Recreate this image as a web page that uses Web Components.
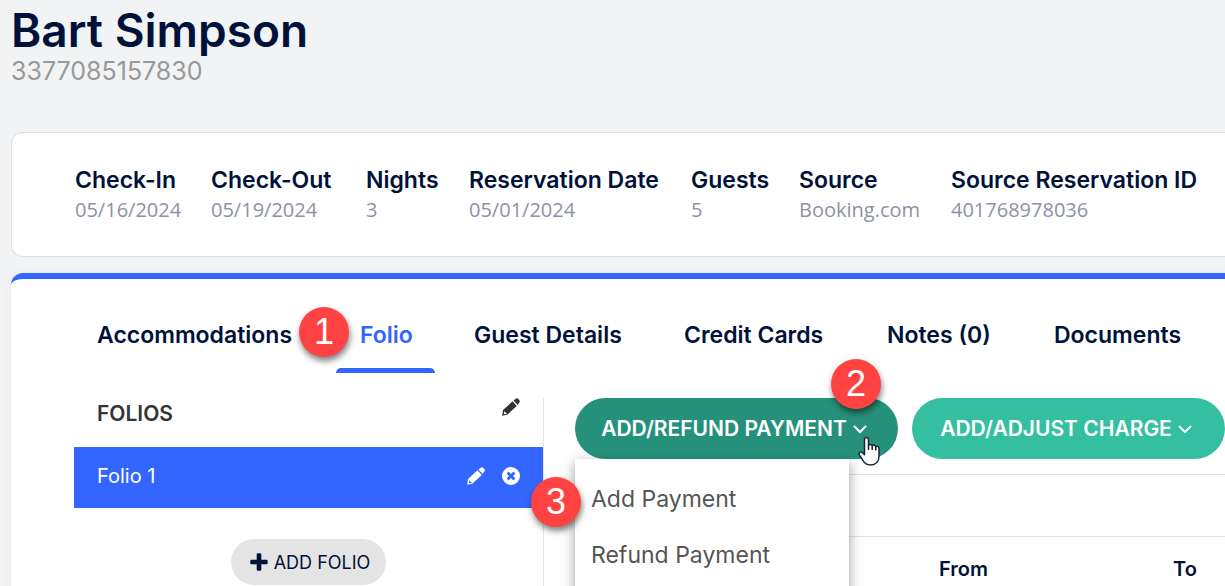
<!DOCTYPE html>
<html lang="en">
<head>
<meta charset="utf-8">
<title>Reservation – Bart Simpson</title>
<style>
  body {
    margin: 0;
    background: #f1f3f5;
    color: #00123a;
    font-family: Inter, "Open Sans", sans-serif;
  }
</style>
</head>
<body>
<reservation-page></reservation-page>

<script>
const define = (name, html) => {
  const template = document.createElement('template');
  template.innerHTML = '<style>*{box-sizing:border-box}:host([hidden]){display:none}</style>' + html;
  customElements.define(name, class extends HTMLElement {
    constructor() {
      super();
      this.attachShadow({ mode: 'open' }).append(template.content.cloneNode(true));
    }
  });
};

const ICONS = {
  pencil: ['0 0 20 20', '<path fill-rule="evenodd" d="M.2 19.800l.9-6.400L11.700 3.700l4.700 5.100L5.800 18.700zM2.600 14.700l-.4 2.700 1.100.7 2.300-.6zM12.800 2.800l2.400-2.100q1.500-1.200 2.800.2l1.300 1.500q1.100 1.500-.1 2.700L17.500 7.700z"/>'],
  remove: ['0 0 18 18', '<path fill-rule="evenodd" d="M9 0a9 9 0 1 0 0 18A9 9 0 0 0 9 0zM6.600 4.600L9 7l2.400-2.400 2 2L11 9l2.400 2.400-2 2L9 11l-2.400 2.400-2-2L7 9 4.600 6.600z"/>'],
  plus: ['0 0 18 18', '<path d="M6.700 1.500Q6.700.3 8 .3h2q1.300 0 1.300 1.200v5.200h5.200q1.200 0 1.200 1.300v2q0 1.300-1.200 1.300h-5.200v5.200q0 1.200-1.300 1.200H8q-1.300 0-1.300-1.200v-5.200H1.500Q.3 11.300.3 10V8q0-1.300 1.200-1.300h5.200z"/>'],
  chevron: ['0 0 14 14', '<path d="M1 4l6 6 6-6" fill="none" stroke="currentColor" stroke-width="2"/>'],
  hand: ['0 0 22 30', '<path d="M6.500 3.500c0-2.700 4-2.700 4 0v6c.3-1.500 3.400-1.500 3.700.4.700-1.300 3.400-1 3.600.9.900-1 3.200-.6 3.200 1.500V20c0 5.500-3.200 9-8.500 9-4 0-6-1.800-7.500-4.500l-3.500-5.300c-1.400-2.700 1.300-4.300 3-2.400l2 2z" fill="#fff" stroke="#1b2436" stroke-width="1.500" stroke-linejoin="round"/><path d="M10.500 9v5M14.200 10v4M17.800 11v3.500" fill="none" stroke="#1b2436" stroke-width="1.500"/>']
};

customElements.define('ui-icon', class extends HTMLElement {
  connectedCallback() {
    if (this.shadowRoot) return;
    const [box, shape] = ICONS[this.getAttribute('name')];
    this.attachShadow({ mode: 'open' }).innerHTML = `
      <style>:host{display:inline-block;flex:none;width:18px;height:18px}svg{display:block;width:100%;height:100%}</style>
      <svg viewBox="${box}" fill="currentColor" aria-hidden="true">${shape}</svg>`;
  }
});

define('step-badge', `
  <style>
    :host {
      display: grid; place-items: center; position: absolute; z-index: 3;
      width: 50px; height: 50px; border-radius: 50%;
      background: #ff4242; color: #fff; box-shadow: 1px 4px 6px rgba(0,0,0,.5);
      font: 400 36px/50px "Liberation Sans", Arial, sans-serif;
    }
  </style>
  <slot></slot>`);

define('guest-heading', `
  <style>
    :host { display: block; padding: 4px 0 46px; }
    h1 { margin: 0; font-size: 46px; line-height: 52px; font-weight: 600; }
    p { margin: 0; font-size: 25px; line-height: 30px; color: #999; }
  </style>
  <h1><slot></slot></h1>
  <p><slot name="number"></slot></p>`);

define('stay-field', `
  <style>
    :host { display: block; white-space: nowrap; }
    dt { font-size: 23px; line-height: 32px; font-weight: 600; }
    dd { margin: 0; font: 400 20px/28px "Open Sans", sans-serif; color: #8d92a6; }
    dl { margin: 0; }
  </style>
  <dl><dt><slot name="label"></slot></dt><dd><slot></slot></dd></dl>`);

define('stay-summary', `
  <style>
    :host {
      display: grid; grid-template-columns: 136fr 155fr 103fr 222fr 108fr 152fr 274fr;
      padding: 31px 0 32px 63px; background: #fff;
      border: 1px solid #dddfe1; border-right: 0; border-radius: 12px 0 0 12px;
    }
  </style>
  <stay-field><span slot="label">Check-In</span>05/16/2024</stay-field>
  <stay-field><span slot="label">Check-Out</span>05/19/2024</stay-field>
  <stay-field><span slot="label">Nights</span>3</stay-field>
  <stay-field><span slot="label">Reservation Date</span>05/01/2024</stay-field>
  <stay-field><span slot="label">Guests</span>5</stay-field>
  <stay-field><span slot="label">Source</span>Booking.com</stay-field>
  <stay-field><span slot="label">Source Reservation ID</span>401768978036</stay-field>`);

define('reservation-tabs', `
  <style>
    :host { display: block; padding: 18px 19px 0 62px; }
    nav { display: grid; grid-template-columns: 248fr 99fr 195fr 188fr 152fr 176fr; column-gap: 15px; }
    a {
      position: relative; padding: 21px 0 15px 24px; white-space: nowrap; color: inherit; text-decoration: none;
      font-size: 23px; line-height: 35px; font-weight: 600; border-bottom: 5px solid transparent;
    }
    a[aria-current] { color: #36f; }
    a[aria-current]::after {
      content: ""; position: absolute; inset: auto 0 -5px; height: 5px; background: #36f; border-radius: 5px 5px 0 0;
    }
    step-badge { top: 10px; left: -37px; }
  </style>
  <nav aria-label="Reservation sections">
    <a href="#accommodations">Accommodations</a>
    <a href="#folio" aria-current="page">Folio<step-badge>1</step-badge></a>
    <a href="#guest">Guest Details</a>
    <a href="#cards">Credit Cards</a>
    <a href="#notes">Notes (0)</a>
    <a href="#documents">Documents</a>
  </nav>`);

define('folio-list', `
  <style>
    :host { display: flex; flex-direction: column; border-right: 1px solid #e6e6e8; }
    header, .row { display: flex; padding: 0 23px; }
    header { justify-content: space-between; height: 49px; color: #333; }
    h2 { margin: 0; font-size: 21px; line-height: 32px; font-weight: 600; }
    .row { align-items: center; gap: 17px; height: 61px; padding-bottom: 3px; background: #36f; color: #fff; font-size: 20px; }
    .row a { flex: 1; color: inherit; text-decoration: none; }
    button { border: 0; padding: 0; background: none; color: inherit; font: inherit; cursor: pointer; display: flex; align-items: center; }
    header button { align-self: flex-start; }
    .add {
      align-self: center; gap: 6px; margin-top: 31px; height: 46px; padding: 0 16px 0 19px; border-radius: 23px;
      background: #e4e4e4; font-size: 18px;
    }
  </style>
  <header><h2>FOLIOS</h2><button aria-label="Edit folios"><ui-icon name="pencil"></ui-icon></button></header>
  <div class="row">
    <a href="#folio-1">Folio 1</a>
    <button aria-label="Rename folio"><ui-icon name="pencil"></ui-icon></button>
    <button aria-label="Delete folio"><ui-icon name="remove"></ui-icon></button>
  </div>
  <button class="add"><ui-icon name="plus"></ui-icon><span>ADD FOLIO</span></button>`);

define('action-button', `
  <style>
    :host { display: block; position: relative; }
    button {
      display: flex; align-items: center; justify-content: center; gap: 6px; width: 100%; height: 61px; padding: 0 5px 0 0;
      border: 0; border-radius: 31px; background: #34c0a0; color: #fff; white-space: nowrap;
      font: 600 21px/30px Inter, sans-serif; cursor: pointer;
    }
    :host([active]) button { background: #26917a; }
    ui-icon { width: 14px; height: 14px; }
  </style>
  <button><slot></slot><ui-icon name="chevron"></ui-icon></button>
  <slot name="over"></slot>`);

define('action-menu', `
  <style>
    :host {
      display: block; position: absolute; top: 61px; left: 0; z-index: 1; width: 274px; padding: 12px 0 30px;
      background: #fff; box-shadow: 0 4px 12px rgba(0,0,0,.4);
    }
    a { display: block; padding: 0 16px; color: #555; font-size: 23px; line-height: 56px; text-decoration: none; }
    step-badge { top: 18px; left: -44px; }
  </style>
  <a href="#add-payment">Add Payment</a>
  <a href="#refund-payment">Refund Payment</a>
  <step-badge>3</step-badge>`);

define('charges-table', `
  <style>
    :host { display: block; margin-top: 15px; border-top: 1px solid #e2e3e5; }
    table { width: 100%; margin-top: 61px; border-collapse: collapse; table-layout: fixed; border-top: 1px solid #e2e3e5; }
    th { padding: 0; text-align: left; font-size: 20px; line-height: 64px; font-weight: 600; }
    .lead { width: 56%; }
    .from { width: 36%; }
  </style>
  <table><thead><tr><td class="lead"></td><th class="from" scope="col">From</th><th scope="col">To</th></tr></thead></table>`);

define('folio-panel', `
  <style>
    :host { display: grid; grid-template-columns: 470px minmax(0, 1fr); flex: 1; padding: 25px 0 0 63px; }
    section { padding-left: 31px; }
    .actions { display: grid; grid-template-columns: 323fr 313fr; gap: 14px; }
    .pointer { position: absolute; z-index: 2; right: 18px; top: 38px; width: 22px; height: 30px; }
    step-badge { right: 17px; top: -39px; }
  </style>
  <folio-list></folio-list>
  <section>
    <div class="actions">
      <action-button active>ADD/REFUND PAYMENT
        <action-menu slot="over"></action-menu>
        <step-badge slot="over">2</step-badge>
        <ui-icon slot="over" class="pointer" name="hand"></ui-icon>
      </action-button>
      <action-button>ADD/ADJUST CHARGE</action-button>
    </div>
    <charges-table></charges-table>
  </section>`);

define('reservation-page', `
  <style>
    :host { display: flex; flex-direction: column; height: 100vh; overflow: hidden; padding-left: 11px; box-sizing: border-box; }
    main {
      flex: 1; display: flex; flex-direction: column; margin-top: 16px; background: #fff;
      border-top: 6px solid #36f; border-radius: 12px 0 0 0; box-shadow: 0 0 8px rgba(0,0,0,.04);
    }
  </style>
  <guest-heading>Bart Simpson<span slot="number">3377085157830</span></guest-heading>
  <stay-summary></stay-summary>
  <main>
    <reservation-tabs></reservation-tabs>
    <folio-panel></folio-panel>
  </main>`);
</script>
</body>
</html>
